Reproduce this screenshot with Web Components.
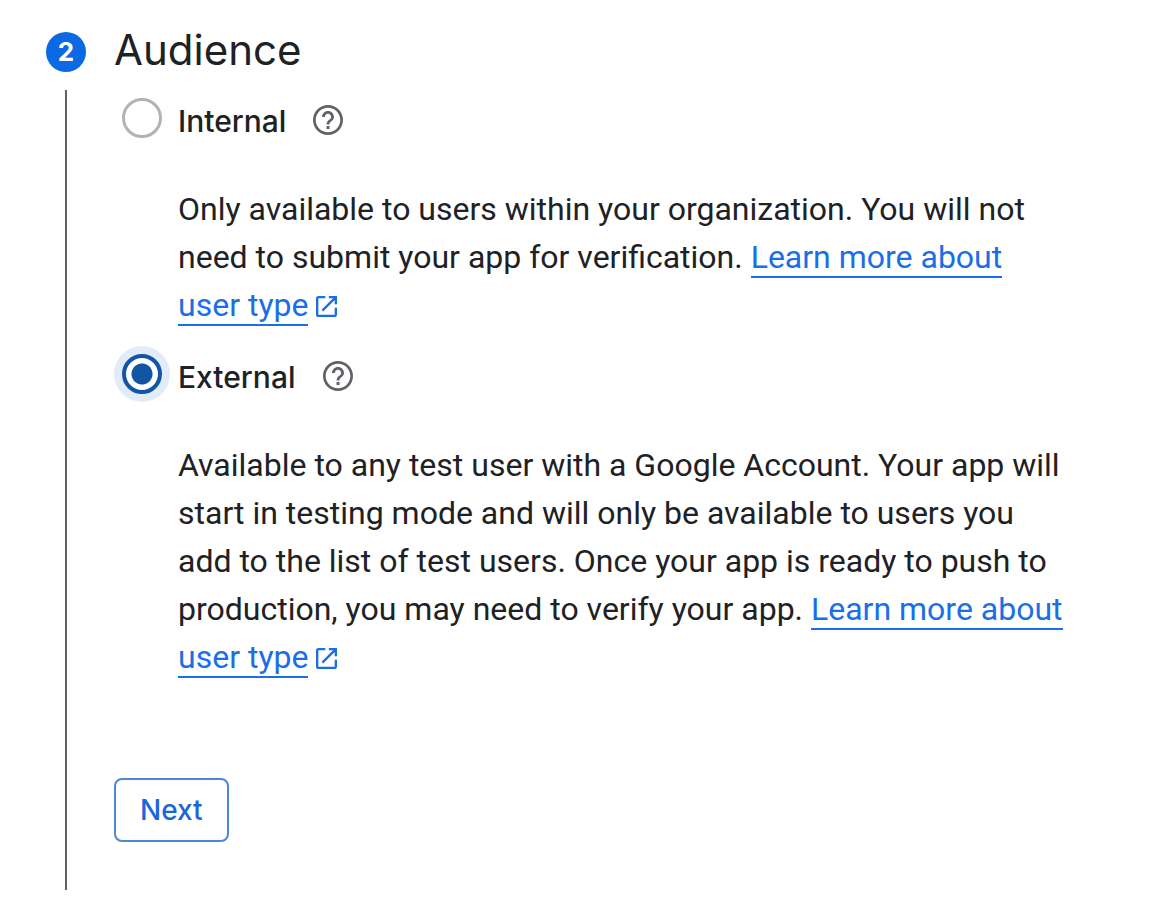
<!DOCTYPE html>
<html lang="en">
<head>
  <meta charset="utf-8">
  <meta name="viewport" content="width=device-width, initial-scale=1">
  <title>Audience</title>
  <style>
    body {
      margin: 0;
      background: #fff;
      color: #202124;
      font-family: Roboto, sans-serif;
      font-size: 32px;
      line-height: 48px;
      --display-font: Inter, sans-serif;
      --blue: #1a6fe8;
      --grey: #5f6368;
    }
  </style>
</head>
<body>
  <setup-step number="2">
    <span slot="title">Audience</span>

    <radio-option help="About internal users">
      <input slot="radio" type="radio" name="audience" id="internal" value="internal">
      <label slot="label" for="internal">Internal</label>
      Only available to users within your organization. You will not need to submit your app for verification.
      <external-link href="#user-type">Learn more about user type</external-link>
    </radio-option>

    <radio-option help="About external users">
      <input slot="radio" type="radio" name="audience" id="external" value="external" checked>
      <label slot="label" for="external">External</label>
      Available to any test user with a Google Account. Your app will start in testing mode and will only be available to users you add to the list of test users. Once your app is ready to push to production, you may need to verify your app.
      <external-link href="#user-type">Learn more about user type</external-link>
    </radio-option>

    <outline-button slot="actions">Next</outline-button>
  </setup-step>

  <script>
    class SetupStep extends HTMLElement {
      constructor() {
        super();
        this.attachShadow({ mode: "open" });
      }

      connectedCallback() {
        this.render();
      }

      render() {
        this.shadowRoot.innerHTML = /*html*/ `
          <style>
            :host {
              display: block;
              padding: 24px 104px 20px 46px;
            }
            section {
              display: grid;
              grid-template-columns: 40px 1fr;
              column-gap: 28px;
            }
            .side {
              display: flex;
              flex-direction: column;
              align-items: center;
              gap: 18px;
              padding-top: 8px;
            }
            .number {
              width: 40px;
              height: 40px;
              border-radius: 50%;
              background: #0b69e3;
              color: #fff;
              font-family: var(--display-font);
              font-size: 26px;
              font-weight: 700;
              line-height: 40px;
              text-align: center;
            }
            .rail {
              flex: 1;
              width: 2px;
              background: var(--grey);
            }
            h2 {
              margin: 0 0 22px;
              font-family: var(--display-font);
              font-size: 42px;
              font-weight: 400;
              line-height: 52px;
            }
            .options {
              display: flex;
              flex-direction: column;
              gap: 25px;
              padding-left: 8px;
            }
            .actions {
              padding: 97px 0 48px;
            }
          </style>
          <section>
            <div class="side">
              <span class="number">${this.getAttribute("number")}</span>
              <span class="rail"></span>
            </div>
            <div>
              <h2><slot name="title"></slot></h2>
              <div class="options"><slot></slot></div>
              <div class="actions"><slot name="actions"></slot></div>
            </div>
          </section>
        `;
      }
    }

    class RadioOption extends HTMLElement {
      constructor() {
        super();
        this.attachShadow({ mode: "open" });
      }

      connectedCallback() {
        this.render();
      }

      render() {
        this.shadowRoot.innerHTML = /*html*/ `
          <style>
            :host {
              display: block;
            }
            .row {
              display: flex;
              align-items: center;
              height: 40px;
            }
            ::slotted(input) {
              appearance: none;
              box-sizing: border-box;
              flex: none;
              width: 40px;
              height: 40px;
              margin: 0 16px 0 0;
              border: 3px solid #b3b3b3;
              border-radius: 50%;
              background: #fff;
            }
            ::slotted(input:checked) {
              border: 4px solid #1155a5;
              background: radial-gradient(circle, #1155a5 10px, #fff 11px);
              box-shadow: 0 0 0 8px #e2ecf9;
            }
            ::slotted(label) {
              padding-top: 6px;
              font-family: var(--display-font);
              font-size: 30px;
              font-weight: 500;
              line-height: 40px;
            }
            button {
              display: flex;
              margin: 4px 0 0 24px;
              padding: 0;
              border: 0;
              background: none;
              color: var(--grey);
            }
            p {
              margin: 47px 0 0;
              padding-left: 56px;
            }
          </style>
          <div class="row">
            <slot name="radio"></slot>
            <slot name="label"></slot>
            <button type="button" aria-label="${this.getAttribute("help")}">
              <svg width="36" height="36" viewBox="0 0 24 24" fill="currentColor" aria-hidden="true">
                <path d="M11 18h2v-2h-2v2zm1-16C6.480 2 2 6.480 2 12s4.480 10 10 10 10-4.480 10-10S17.520 2 12 2zm0 18.200c-4.520 0-8.200-3.680-8.200-8.200S7.480 3.800 12 3.800s8.200 3.680 8.200 8.200-3.680 8.200-8.200 8.200zM12 6c-2.210 0-4 1.790-4 4h1.900c0-1.160.940-2.100 2.100-2.100s2.100.940 2.100 2.100c0 2-3.050 1.850-3.050 5h1.900c0-2.250 3.050-2.500 3.050-5 0-2.210-1.790-4-4-4z"/>
              </svg>
            </button>
          </div>
          <p><slot></slot></p>
        `;
      }
    }

    class ExternalLink extends HTMLElement {
      constructor() {
        super();
        this.attachShadow({ mode: "open" });
      }

      connectedCallback() {
        this.render();
      }

      render() {
        this.shadowRoot.innerHTML = /*html*/ `
          <style>
            :host {
              display: inline;
            }
            a {
              color: var(--blue);
              text-decoration: none;
            }
            span {
              border-bottom: 2px solid;
            }
            svg {
              margin-left: 8px;
              vertical-align: -1px;
            }
          </style>
          <a href="${this.getAttribute("href")}"><span><slot></slot></span><svg width="21" height="21" viewBox="3 3 18 18" fill="currentColor" aria-hidden="true"><path d="M19 19H5V5h6V3H5c-1.110 0-2 .900-2 2v14c0 1.100.890 2 2 2h14c1.100 0 2-.900 2-2v-6h-2v6zM14 3v2h3.590l-9.830 9.830 1.410 1.410L19 6.410V10h2V3h-7z"/></svg></a>
        `;
      }
    }

    class OutlineButton extends HTMLElement {
      constructor() {
        super();
        this.attachShadow({ mode: "open" });
      }

      connectedCallback() {
        this.render();
      }

      render() {
        this.shadowRoot.innerHTML = /*html*/ `
          <style>
            :host {
              display: block;
            }
            button {
              display: block;
              padding: 10px 24px;
              border: 2px solid #4f86d2;
              border-radius: 8px;
              background: #fff;
              color: #1a66dc;
              font-family: var(--display-font);
              font-size: 28px;
              font-weight: 500;
              line-height: 40px;
            }
          </style>
          <button type="button"><slot></slot></button>
        `;
      }
    }

    customElements.define("setup-step", SetupStep);
    customElements.define("radio-option", RadioOption);
    customElements.define("external-link", ExternalLink);
    customElements.define("outline-button", OutlineButton);
  </script>
</body>
</html>
